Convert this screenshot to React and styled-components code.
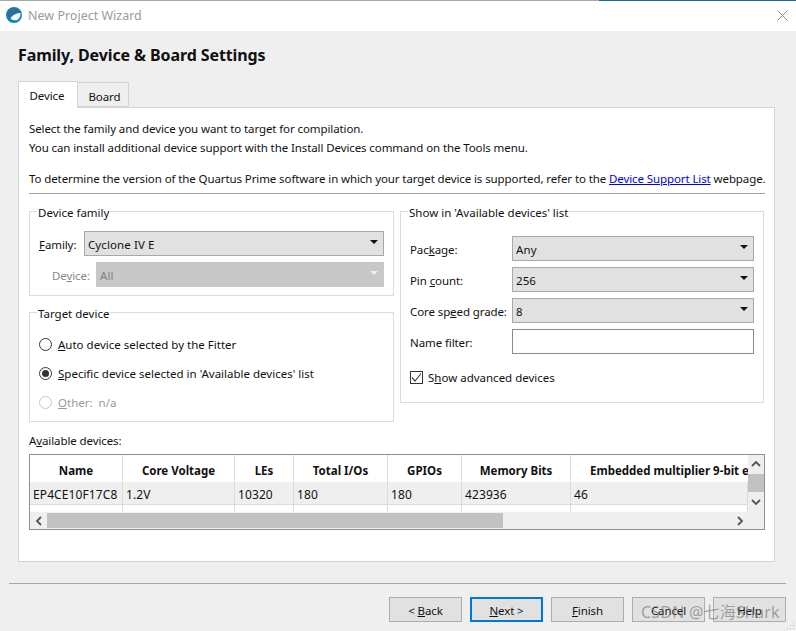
import React from "react";
import styled, { createGlobalStyle } from "styled-components";

const GlobalStyle = createGlobalStyle`
  html, body {
    margin: 0;
    padding: 0;
    background: #efefef;
  }
  * {
    box-sizing: border-box;
  }
`;

const Page = styled.div`
  position: relative;
  width: 796px;
  height: 631px;
  overflow: hidden;
  background: #efefef;
  color: #111;
  font-family: "Noto Sans", "Open Sans", sans-serif;
  font-size: 11.5px;
  letter-spacing: -0.1px;
  line-height: 19px;
`;

const TopStrip = styled.div`
  display: flex;
  height: 1px;
  background: #a8a8a8;
`;

const StripBlue = styled.div`
  margin-left: auto;
  width: 197px;
  background: #1f6a9e;
`;

const TitleBar = styled.div`
  display: flex;
  align-items: center;
  height: 30px;
  padding: 0 8px 2px 6px;
  background: #fff;
`;

const WindowTitle = styled.span`
  margin-left: 6px;
  color: #9b9b9b;
  font-size: 12.5px;
  letter-spacing: 0;
`;

const CloseButton = styled.svg`
  margin-left: auto;
`;

const Content = styled.div`
  padding: 0 21px 0 18px;
`;

const Heading = styled.h1`
  margin: 14px 0 16px;
  font-size: 16px;
  letter-spacing: -0.1px;
  line-height: 20px;
  font-weight: 700;
  color: #111;
`;

const TabBar = styled.div`
  display: flex;
  align-items: flex-end;
  height: 26px;
`;

const Tab = styled.div`
  display: flex;
  align-items: center;
  justify-content: center;
  width: ${(p) => p.$width}px;
  height: ${(p) => (p.$active ? 27 : 25)}px;
  margin-bottom: ${(p) => (p.$active ? -1 : 0)}px;
  padding: ${(p) => (p.$active ? "1px 2px 0 0" : "3px 0 0 3px")};
  background: ${(p) => (p.$active ? "#fff" : "#efefef")};
  border: 1px solid #d4d4d4;
  border-left-width: ${(p) => (p.$active ? 1 : 0)}px;
  border-bottom: ${(p) => (p.$active ? "none" : "1px solid #d4d4d4")};
  position: relative;
  z-index: ${(p) => (p.$active ? 1 : 0)};
`;

const Panel = styled.div`
  width: 757px;
  height: 455px;
  padding: 11px 10px 0 10px;
  background: #fff;
  border: 1px solid #d4d4d4;
`;

const Intro = styled.p`
  margin: 0;
  white-space: nowrap;
`;

const Spacer = styled.div`
  height: 12px;
`;

const DocLink = styled.a`
  color: #0000ee;
  text-decoration: underline;
`;

const Rule = styled.hr`
  width: 736px;
  height: 1px;
  margin: 5px 0 7px;
  border: 0;
  background: #a6a6a6;
`;

const Columns = styled.div`
  display: flex;
  align-items: flex-start;
  gap: 6px;
`;

const LeftColumn = styled.div`
  display: flex;
  flex-direction: column;
  gap: 6px;
  width: 365px;
`;

const Group = styled.fieldset`
  margin: 0;
  padding: 0 9px;
  width: ${(p) => p.$width}px;
  height: ${(p) => p.$height}px;
  border: 1px solid #dcdcdc;
  min-width: 0;
`;

const GroupTitle = styled.legend`
  margin-left: -2px;
  padding: 4px 1px 0;
  letter-spacing: 0;
  line-height: 16px;
`;

const Key = styled.span`
  text-decoration: underline;
`;

const FieldRow = styled.div`
  display: flex;
  align-items: center;
  gap: ${(p) => p.$gap ?? 6}px;
  height: 25px;
  margin-top: ${(p) => p.$top}px;
  padding-left: ${(p) => p.$indent || 0}px;
`;

const FieldLabel = styled.span`
  flex: none;
  width: ${(p) => (p.$width ? `${p.$width}px` : "auto")};
  padding-top: 2px;
  color: ${(p) => (p.$disabled ? "#8a8a8a" : "inherit")};
  white-space: nowrap;
`;

const Select = styled.div`
  display: flex;
  align-items: center;
  flex: 1;
  height: 25px;
  padding: 2px 5px 0 3px;
  letter-spacing: 0.1px;
  background: ${(p) => (p.$disabled ? "#c8c8c8" : "#e1e1e1")};
  border: 1px solid ${(p) => (p.$disabled ? "#c8c8c8" : "#a8a8a8")};
  color: ${(p) => (p.$disabled ? "#7f7f7f" : "inherit")};
`;

const Caret = styled.span`
  width: 0;
  height: 0;
  margin-left: auto;
  margin-top: -5px;
  border-left: 4px solid transparent;
  border-right: 4px solid transparent;
  border-top: 4px solid ${(p) => (p.$disabled ? "#f0f0f0" : "#111")};
`;

const TextInput = styled.div`
  flex: 1;
  height: 25px;
  background: #fff;
  border: 1px solid #8a8a8a;
`;

const RadioRow = styled.div`
  display: flex;
  align-items: center;
  gap: 6px;
  height: 29px;
  letter-spacing: 0;
  color: ${(p) => (p.$disabled ? "#9a9a9a" : "inherit")};
`;

const RadioList = styled.div`
  margin-top: 8px;
`;

const Radio = styled.span`
  display: flex;
  align-items: center;
  justify-content: center;
  width: 13px;
  height: 13px;
  border-radius: 50%;
  background: #fff;
  border: 1px solid ${(p) => (p.$disabled ? "#c8c8c8" : "#333")};

  &::after {
    content: "";
    display: ${(p) => (p.$checked ? "block" : "none")};
    width: 7px;
    height: 7px;
    border-radius: 50%;
    background: #333;
  }
`;

const CheckRow = styled.div`
  display: flex;
  align-items: center;
  gap: 5px;
  height: 19px;
  margin-top: 14px;
  letter-spacing: 0;
`;

const CheckBox = styled.span`
  display: flex;
  align-items: center;
  justify-content: center;
  width: 13px;
  height: 13px;
  background: #fff;
  border: 1px solid #333;
`;

const TableLabel = styled.div`
  margin-top: 9px;
  height: 23px;
  line-height: 20px;
`;

const TableFrame = styled.div`
  display: grid;
  grid-template-columns: 1fr 16px;
  grid-template-rows: 57px 17px;
  width: 736px;
  height: 76px;
  background: #efefef;
  border: 1px solid #8f8f8f;
`;

const Grid = styled.div`
  display: grid;
  grid-template-columns: 93px 112px 59px 94px 74px 109px 177px;
  grid-template-rows: 27px 23px 7px;
  overflow: hidden;
  background: #fff;
`;

const HeadCell = styled.div`
  display: flex;
  align-items: center;
  justify-content: center;
  padding-top: 3px;
  overflow: hidden;
  white-space: nowrap;
  font-weight: 700;
  letter-spacing: 0;
  border-right: 1px solid #dcdcdc;

  &:nth-child(7) {
    justify-content: flex-start;
    padding-left: 19px;
    border-right: 0;
  }
`;

const BodyCell = styled.div`
  display: flex;
  align-items: center;
  padding: 2px 0 0 3px;
  font-size: 12px;
  letter-spacing: 0.1px;
  white-space: nowrap;
  background: #efefef;
  border-right: 1px solid #dcdcdc;
  border-bottom: 1px solid #dcdcdc;
`;

const EmptyCell = styled.div`
  border-right: 1px solid #dcdcdc;
`;

const VScroll = styled.div`
  display: flex;
  flex-direction: column;
  align-items: center;
  justify-content: space-between;
`;

const VThumb = styled.div`
  width: 100%;
  height: 18px;
  background: #c2c2c2;
`;

const ArrowSlot = styled.div`
  display: flex;
  align-items: center;
  justify-content: center;
  flex: none;
  width: ${(p) => p.$w || 16}px;
  height: ${(p) => p.$h || 17}px;
`;

const HScroll = styled.div`
  display: flex;
  align-items: center;
  height: 17px;
`;

const HThumb = styled.div`
  width: 456px;
  height: 15px;
  background: #c2c2c2;
`;

const ArrowEnd = styled.div`
  margin-left: auto;
`;

const Footer = styled.div`
  margin: 21px 10px 0 9px;
  padding-top: 13px;
  border-top: 1px solid #a6a6a6;
`;

const ButtonRow = styled.div`
  display: flex;
  justify-content: flex-end;
  gap: 8px;
`;

const Button = styled.button`
  width: 73px;
  height: 25px;
  padding: 2px 0 0;
  background: #e1e1e1;
  border: ${(p) => (p.$primary ? "2px solid #0078d7" : "1px solid #adadad")};
  color: #111;
  font: inherit;
  letter-spacing: inherit;
`;

const Watermark = styled.div`
  position: absolute;
  left: 641px;
  top: 601px;
  color: rgba(110, 110, 110, 0.6);
  font-family: "Noto Sans", "Noto Sans CJK SC", sans-serif;
  font-size: 16px;
  letter-spacing: 0.2px;
  line-height: 22px;
  white-space: nowrap;
`;

const Grip = styled.svg`
  position: absolute;
  right: 1px;
  bottom: 1px;
`;

const Chevron = ({ d }) => (
  <svg width="10" height="10" viewBox="0 0 10 10">
    <path d={d} fill="none" stroke="#555" strokeWidth="1.8" />
  </svg>
);

const Logo = () => (
  <svg width="16" height="16" viewBox="0 0 16 16">
    <circle cx="8" cy="8" r="8" fill="#1680bb" />
    <path d="M1.5 8 C1 4 4 1.2 8 1 C11 1 14 3 14.5 6 C11 6 7 7.5 4.5 11 C3 10.5 2 9.5 1.5 8 Z" fill="#2c6f9f" />
    <path d="M4.5 11 C7 7.5 11 6 14.5 6 C15 9 13 12 10.5 13.2 C8 13.8 5.5 12.8 4.5 11 Z" fill="#f4f8fb" />
  </svg>
);

const columns = ["Name", "Core Voltage", "LEs", "Total I/Os", "GPIOs", "Memory Bits", "Embedded multiplier 9-bit e"];
const row = ["EP4CE10F17C8", "1.2V", "10320", "180", "180", "423936", "46"];

const App = () => {
  return (
    <Page>
      <GlobalStyle />
      <TopStrip>
        <StripBlue />
      </TopStrip>
      <TitleBar>
        <Logo />
        <WindowTitle>New Project Wizard</WindowTitle>
        <CloseButton width="11" height="11" viewBox="0 0 11 11">
          <path d="M0.5 0.5 L10.5 10.5 M10.5 0.5 L0.5 10.5" stroke="#8c8c8c" strokeWidth="1" />
        </CloseButton>
      </TitleBar>
      <Content>
        <Heading>Family, Device &amp; Board Settings</Heading>
        <TabBar>
          <Tab $active $width={60}>Device</Tab>
          <Tab $width={51}>Board</Tab>
        </TabBar>
        <Panel>
          <Intro>Select the family and device you want to target for compilation.</Intro>
          <Intro>You can install additional device support with the Install Devices command on the Tools menu.</Intro>
          <Spacer />
          <Intro>
            To determine the version of the Quartus Prime software in which your target device is supported, refer to the{" "}
            <DocLink>Device Support List</DocLink> webpage.
          </Intro>
          <Rule />
          <Columns>
            <LeftColumn>
              <Group $width={365} $height={95}>
                <GroupTitle>Device family</GroupTitle>
                <FieldRow $top={10}>
                  <FieldLabel $width={39}><Key>F</Key>amily:</FieldLabel>
                  <Select>
                    Cyclone IV E
                    <Caret />
                  </Select>
                </FieldRow>
                <FieldRow $top={6} $indent={13}>
                  <FieldLabel $disabled $width={38}>De<Key>v</Key>ice:</FieldLabel>
                  <Select $disabled>
                    All
                    <Caret $disabled />
                  </Select>
                </FieldRow>
              </Group>
              <Group $width={365} $height={120}>
                <GroupTitle>Target device</GroupTitle>
                <RadioList>
                  <RadioRow>
                    <Radio />
                    <span><Key>A</Key>uto device selected by the Fitter</span>
                  </RadioRow>
                  <RadioRow>
                    <Radio $checked />
                    <span><Key>S</Key>pecific device selected in 'Available devices' list</span>
                  </RadioRow>
                  <RadioRow $disabled>
                    <Radio $disabled />
                    <span><Key>O</Key>ther:&nbsp; n/a</span>
                  </RadioRow>
                </RadioList>
              </Group>
            </LeftColumn>
            <Group $width={365} $height={202}>
              <GroupTitle>Show in 'Available devices' list</GroupTitle>
              <FieldRow $top={15} $gap={0}>
                <FieldLabel $width={102}>Pac<Key>k</Key>age:</FieldLabel>
                <Select>
                  Any
                  <Caret />
                </Select>
              </FieldRow>
              <FieldRow $top={6} $gap={0}>
                <FieldLabel $width={102}>Pin <Key>c</Key>ount:</FieldLabel>
                <Select>
                  256
                  <Caret />
                </Select>
              </FieldRow>
              <FieldRow $top={6} $gap={0}>
                <FieldLabel $width={102}>Core sp<Key>e</Key>ed grade:</FieldLabel>
                <Select>
                  8
                  <Caret />
                </Select>
              </FieldRow>
              <FieldRow $top={6} $gap={0}>
                <FieldLabel $width={102}>Name filter:</FieldLabel>
                <TextInput />
              </FieldRow>
              <CheckRow>
                <CheckBox>
                  <svg width="11" height="11" viewBox="0 0 11 11">
                    <path d="M1 5.5 L4 9 L10 1.5" fill="none" stroke="#444" strokeWidth="1.2" />
                  </svg>
                </CheckBox>
                <span>S<Key>h</Key>ow advanced devices</span>
              </CheckRow>
            </Group>
          </Columns>
          <TableLabel>A<Key>v</Key>ailable devices:</TableLabel>
          <TableFrame>
            <Grid>
              {columns.map((name) => (
                <HeadCell key={name}>{name}</HeadCell>
              ))}
              {row.map((value, i) => (
                <BodyCell key={i}>{value}</BodyCell>
              ))}
              {columns.map((name) => (
                <EmptyCell key={name} />
              ))}
            </Grid>
            <VScroll>
              <ArrowSlot $h={18}>
                <Chevron d="M1 7 L5 3 L9 7" />
              </ArrowSlot>
              <VThumb />
              <ArrowSlot $h={20}>
                <Chevron d="M1 3 L5 7 L9 3" />
              </ArrowSlot>
            </VScroll>
            <HScroll>
              <ArrowSlot $w={17}>
                <Chevron d="M7 1 L3 5 L7 9" />
              </ArrowSlot>
              <HThumb />
              <ArrowEnd>
                <ArrowSlot>
                  <Chevron d="M3 1 L7 5 L3 9" />
                </ArrowSlot>
              </ArrowEnd>
            </HScroll>
            <div />
          </TableFrame>
        </Panel>
      </Content>
      <Footer>
        <ButtonRow>
          <Button>&lt; <Key>B</Key>ack</Button>
          <Button $primary><Key>N</Key>ext &gt;</Button>
          <Button><Key>F</Key>inish</Button>
          <Button>Cancel</Button>
          <Button>Help</Button>
        </ButtonRow>
      </Footer>
      <Watermark>CSDN @七海Shark</Watermark>
      <Grip width="10" height="10" viewBox="0 0 10 10">
        <path d="M8 2h1v1H8z M5 5h1v1H5z M8 5h1v1H8z M2 8h1v1H2z M5 8h1v1H5z M8 8h1v1H8z" fill="#bdbdbd" />
      </Grip>
    </Page>
  );
};

export default App;
